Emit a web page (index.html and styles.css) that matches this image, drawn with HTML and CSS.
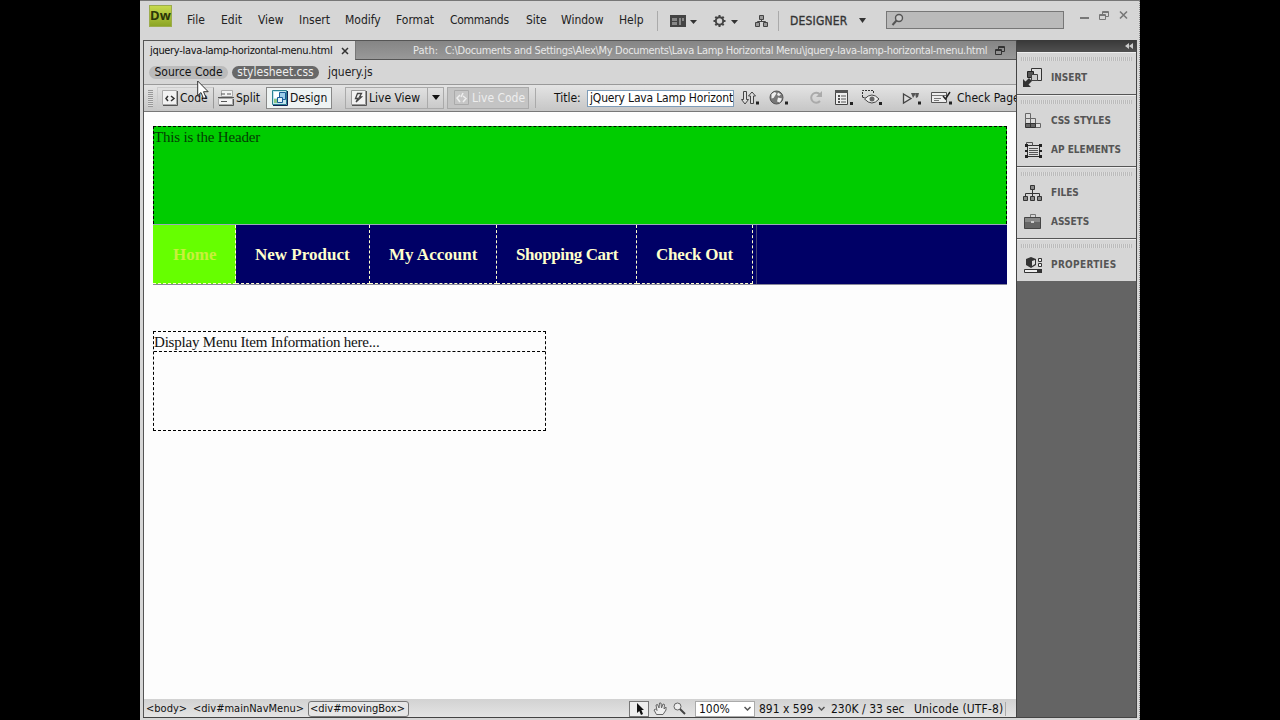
FILE: index.html
```
<!DOCTYPE html>
<html lang="en">
<head>
    <meta charset="UTF-8">
    <title>jquery-lava-lamp-horizontal-menu.html</title>
    <link rel="stylesheet" href="styles.css">
</head>
<body>
<div class="app">
    <div class="menubar">
        <div class="logo">Dw</div>
        <ul class="menu">
            <li class="w34">File</li>
            <li class="w37">Edit</li>
            <li class="w41">View</li>
            <li class="w46">Insert</li>
            <li class="w51">Modify</li>
            <li class="w54">Format</li>
            <li class="w76">Commands</li>
            <li class="w35">Site</li>
            <li class="w58">Window</li>
            <li class="w38">Help</li>
        </ul>
        <div class="app-tools">
            <svg class="ic-layout" width="28" height="14" viewBox="0 0 28 14"><path fill="#444" d="M0 1h16v12H0z"/><path fill="#888" d="M2 4h5v3H2zM2 8h5v3H2zM9 4h2v7H9zM12 4h2v3h-2z"/><path fill="#333" d="M20 6h7l-3.500 4z"/></svg>
            <svg class="ic-gear" width="27" height="14" viewBox="0 0 27 14"><circle cx="6.500" cy="7" r="3.700" fill="none" stroke="#444" stroke-width="2"/><path stroke="#444" stroke-width="2" d="M6.500 1v2M6.500 11v2M.5 7h2M10.500 7h2M2.300 2.800l1.500 1.500M9.200 9.700l1.500 1.500M10.700 2.800L9.200 4.300M3.800 9.700l-1.500 1.500"/><path fill="#333" d="M18 6h7l-3.500 4z"/></svg>
            <svg class="ic-site" width="13" height="14" viewBox="0 0 13 14"><path fill="#999" stroke="#444" d="M4.500 1.500h4v4h-4zM.5 8.500h4v4h-4zM8.500 8.500h4v4h-4z"/><path fill="none" stroke="#444" d="M6.500 5.500v2M2.500 8.500v-1h8v1"/></svg>
        </div>
        <div class="workspace-name">DESIGNER <svg width="9" height="6" viewBox="0 0 9 6"><path fill="#333" d="M1 0h7L4.500 5z"/></svg></div>
        <div class="search">
            <svg width="14" height="14" viewBox="0 0 14 14"><circle cx="8" cy="5" r="3.500" fill="#ccc" stroke="#555" stroke-width="1.400"/><path stroke="#555" stroke-width="2" d="M5.500 7.500L1.500 12"/></svg>
        </div>
        <div class="window-buttons">
            <svg width="50" height="12" viewBox="0 0 50 12"><path fill="none" stroke="#777" stroke-width="2" d="M0 8h9"/><path fill="none" stroke="#777" d="M19.500 4.500h6v5h-6zM19.500 5.500h6M22.500 4v-2.500h6v5h-3M22.500 2.500h6"/><path stroke="#777" stroke-width="1.600" d="M40 1.500l7 7M47 1.500l-7 7"/></svg>
        </div>
    </div>

    <div class="workspace">
        <div class="document">
            <div class="tabs">
                <div class="tab"><span>jquery-lava-lamp-horizontal-menu.html</span>
                    <svg width="8" height="8" viewBox="0 0 8 8"><path stroke="#333" stroke-width="1.500" d="M1 1l6 6M7 1L1 7"/></svg>
                </div>
                <div class="path"><span class="path-label">Path:</span><span class="path-text">C:\Documents and Settings\Alex\My Documents\Lava Lamp Horizontal Menu\jquery-lava-lamp-horizontal-menu.html</span>
                    <svg width="11" height="11" viewBox="0 0 11 11"><path fill="none" stroke="#333" d="M.5 4.500h6v5h-6zM.5 5.500h6M3.500 4V1.500h6v5h-3M3.500 2.500h6"/></svg>
                </div>
            </div>
            <div class="related">
                <span class="pill source">Source Code</span>
                <span class="pill css">stylesheet.css</span>
                <span class="js">jquery.js</span>
            </div>
            <div class="toolbar">
                <div class="grip"></div>
                <div class="btn code"><svg width="16" height="16" viewBox="0 0 16 16"><path fill="#f2f2f2" stroke="#aaa" d="M.5.5h14v14H.5z"/><path stroke="#555" d="M15.500 1v14.500H1" fill="none"/><path fill="none" stroke="#333" stroke-width="1.500" d="M6 6L4 8.500 6 11M9 6l3 2.500L9 11"/></svg><span>Code</span></div>
                <div class="btn split"><svg width="16" height="16" viewBox="0 0 16 16"><path fill="#f2f2f2" stroke="#aaa" d="M3.500.5h11v6h-11zM.5 8.500h14v6H.5z"/><path fill="none" stroke="#555" d="M0 7.500h16M15.500 9v6.500H1M3 4h4M9 4h4M3 11.500h6"/></svg><span>Split</span></div>
                <div class="btn design"><svg width="16" height="16" viewBox="0 0 16 16"><path fill="#c4e4ee" stroke="#2b8292" d="M.5.5h14v14H.5z"/><path fill="#fff" d="M2 2h5v6H2z"/><path fill="#9ccdea" stroke="#1a5c9a" d="M7.500 2.500h6v7h-6z"/><path fill="#8cc884" d="M2 9h5v4H2z"/><path fill="#e3f4fa" stroke="#1a5c9a" d="M5.500 7.500h5v5h-5z"/><path stroke="#125" d="M15.500 1v14.500H1" fill="none"/></svg><span>Design</span></div>
                <div class="btn live-view"><svg width="16" height="16" viewBox="0 0 16 16"><path fill="#f2f2f2" stroke="#999" d="M.5.5h14v14H.5z"/><path stroke="#555" d="M15.500 1v14.500H1" fill="none"/><path fill="none" stroke="#444" stroke-width="1.300" d="M6.500 3.500h4L8.500 7h2L5 12l2-3.500H4.500z"/></svg><span>Live View</span></div>
                <div class="btn drop"><svg width="8" height="6" viewBox="0 0 8 6"><path fill="#111" d="M0 0h8L4 5z"/></svg></div>
                <div class="btn live-code"><svg width="16" height="16" viewBox="0 0 16 16"><path fill="#c6c6c6" stroke="#aaa" d="M.5.5h14v14H.5z"/><path fill="none" stroke="#eee" stroke-width="1.500" d="M6 5L3 8l3 4M9 6l3 2.500L9 12M9 3L7 7"/></svg><span>Live Code</span></div>
                <div class="title-label">Title:</div>
                <div class="title-input">jQuery Lava Lamp Horizont</div>
                <svg class="ic-updown" width="20" height="16" viewBox="0 0 20 16"><path fill="#ddd" stroke="#444" d="M3.500 1.500h3v8h2L5 14 1.500 9.500h2zM10.500 13.500h3V6h2L12 2 8.500 6h2z"/><path fill="#222" d="M16 11.500h3v3h-3z"/></svg>
                <svg class="ic-globe" width="20" height="16" viewBox="0 0 20 16"><circle cx="7.500" cy="7.500" r="6.500" fill="#777" stroke="#555"/><path fill="#eee" d="M2.500 4l3-2 2 1-1 2-2 3-2 .5zM9 2.500l3 2-2 1.500-2-1zM9 7.500l4 1-2 4-3-1z"/><path fill="#222" d="M16 11.500h3v3h-3z"/></svg>
                <svg class="ic-refresh" width="14" height="16" viewBox="0 0 14 16"><path fill="none" stroke="#aaa" stroke-width="2" d="M11 4.500A5 5 0 1 0 11 11"/><path fill="#aaa" d="M13 1v6H7z"/></svg>
                <svg class="ic-options" width="20" height="16" viewBox="0 0 20 16"><path fill="#eee" stroke="#444" d="M1.500.5h12v14h-12z"/><path fill="#555" d="M1 0h13v3H1zM4 5h2v2H4zM4 8h2v2H4zM4 11h2v2H4zM7 5.500h5v1H7zM7 8.500h5v1H7zM7 11.500h5v1H7z"/><path fill="#222" d="M16 12h3v3h-3z"/></svg>
                <svg class="ic-eye" width="22" height="16" viewBox="0 0 22 16"><path fill="none" stroke="#333" stroke-dasharray="2 1" d="M1.500 7V.5h11V4M1.500 7.500H5"/><path fill="#eee" stroke="#444" d="M3.500 9Q11 1 18 9Q11 17 3.500 9z"/><circle cx="11" cy="9" r="2.500" fill="#666"/><path fill="#222" d="M18 12h3v3h-3z"/></svg>
                <svg class="ic-validate" width="21" height="16" viewBox="0 0 21 16"><path fill="#ddd" stroke="#444" stroke-width="1.300" d="M1.500 4L9 8.500l-7.500 4.500z"/><path fill="#555" d="M9 3h4v2l-2 3zM13 3h4l-1 4-2 1z"/><path fill="#222" d="M16 11.500h3v3h-3z"/></svg>
                <svg class="ic-check" width="22" height="16" viewBox="0 0 22 16"><path fill="#eee" stroke="#555" d="M.5 2.500h15v10H.5z"/><path stroke="#777" d="M1 5.500h14M3 8.500h7M3 10.500h5"/><path fill="none" stroke="#222" stroke-width="1.500" d="M12 6l2.500 3L19 2"/><path fill="#222" d="M18 11.500h3v3h-3z"/></svg>
                <span class="check-page">Check Page</span>
            </div>

            <div class="canvas">
                <div class="page-header">This is the Header</div>
                <div class="nav">
                    <div class="nav-item home">Home</div>
                    <div class="nav-item product">New Product</div>
                    <div class="nav-item account">My Account</div>
                    <div class="nav-item shopping">Shopping Cart</div>
                    <div class="nav-item checkout">Check Out</div>
                    <div class="nav-end"></div>
                </div>
                <div class="info">
                    <div class="info-text">Display Menu Item Information here...</div>
                </div>
            </div>

            <div class="status">
                <span class="tag t-body">&lt;body&gt;</span>
                <span class="tag t-nav">&lt;div#mainNavMenu&gt;</span>
                <span class="tag selected">&lt;div#movingBox&gt;</span>
                <div class="status-right">
                    <span class="pointer"><svg width="9" height="13" viewBox="0 0 9 13"><path fill="#111" d="M1 0v10l2.300-2L5 12l2-1-1.600-4H8z"/></svg></span>
                    <svg class="ic-hand" width="14" height="14" viewBox="0 0 14 14"><path fill="#eee" stroke="#666" d="M3.500 12.500L1 8l1.500-1L4 8.500 3 3l1.500-.5L6 6l.5-5L8 1l.5 5L10 2l1.500.5L11 7l2-2v3l-3 4.500z"/></svg>
                    <svg class="ic-zoom" width="13" height="13" viewBox="0 0 13 13"><circle cx="4.500" cy="4.500" r="3.500" fill="#eee" stroke="#666"/><path stroke="#444" stroke-width="2" d="M7 7l5 5"/></svg>
                    <span class="percent">100% <svg width="7" height="5" viewBox="0 0 7 5"><path fill="none" stroke="#555" stroke-width="1.500" d="M.5 1l3 3 3-3"/></svg></span>
                    <span class="size">891 x 599<svg width="7" height="5" viewBox="0 0 7 5"><path fill="none" stroke="#555" stroke-width="1.500" d="M.5 1l3 3 3-3"/></svg></span>
                    <span class="weight">230K / 33 sec</span>
                    <span class="encoding">Unicode (UTF-8)</span>
                </div>
            </div>
        </div>

        <div class="dock">
            <div class="dock-top"><svg width="8" height="6" viewBox="0 0 8 6"><path fill="#ccc" d="M4 0v6L0 3zM8 0v6L4 3z"/></svg></div>
            <div class="group">
                <div class="panel"><svg width="20" height="20" viewBox="0 0 20 20"><path fill="#ddd" stroke="#333" d="M8.500.5h10v12h-10z"/><path fill="#555" stroke="#222" d="M4.500 3.500h6v6h-6z"/><path fill="#ccc" stroke="#444" d="M8.500 6.500h6v6h-6z"/><path fill="#333" d="M0 11l2.500 2.500L6 10l3 3-3.500 3.500L8 19H0z"/></svg><span>INSERT</span></div>
            </div>
            <div class="group">
                <div class="panel"><svg width="18" height="18" viewBox="0 0 18 18"><path fill="#ddd" stroke="#666" d="M1.500 1.500h5v5h-5zM1.500 6.500h5v5h-5zM6.500 6.500h5v5h-5zM11.500 11.500h5v4h-5z"/><path fill="#666" stroke="#333" d="M1.500 11.500h5v4h-5zM6.500 11.500h5v4h-5z"/></svg><span>CSS STYLES</span></div>
                <div class="panel"><svg width="18" height="18" viewBox="0 0 18 18"><path fill="#ddd" stroke="#333" d="M3.500 4.500h12v11h-12z"/><path fill="none" stroke="#555" d="M2.500 4V1.500h6v3M5 7.500h9M5 9.500h9M5 11.500h9M5 13.500h9"/><path fill="#222" d="M1 3h3v3H1zM15 3h3v3h-3zM1 9h3v2H1zM15 9h3v2h-3zM1 14h3v3H1zM15 14h3v3h-3z"/></svg><span>AP ELEMENTS</span></div>
            </div>
            <div class="group">
                <div class="panel"><svg width="20" height="18" viewBox="0 0 20 18"><path fill="#888" stroke="#333" d="M7.500 1.500h4v4h-4zM.5 12.500h4v4h-4zM7.500 12.500h4v4h-4zM14.500 12.500h4v4h-4z"/><path fill="none" stroke="#333" d="M9.500 6v6M2.500 12V9.500h14V12"/></svg><span>FILES</span></div>
                <div class="panel"><svg width="18" height="18" viewBox="0 0 18 18"><path fill="none" stroke="#777" d="M6.500 4V1.500h5V4"/><path fill="#666" stroke="#444" d="M.5 4.500h16v11H.5z"/><path fill="#888" d="M1 5h15v4H1z"/><path fill="#ccc" d="M7 8h3v2H7z"/></svg><span>ASSETS</span></div>
            </div>
            <div class="group last">
                <div class="panel"><svg width="20" height="18" viewBox="0 0 20 18"><path fill="#333" d="M3 3l5-2 5 2v6l-5 3-5-3z"/><path fill="#ddd" d="M9 5l3-1v4l-3 2z"/><path fill="#eee" stroke="#333" d="M15.500 2.500h3v3h-3zM15.500 7.500h3v3h-3zM1.500 13.500h17v3h-17z"/><path fill="#333" d="M14 13h5v4h-5z"/></svg><span class="props">PROPERTIES</span></div>
            </div>
        </div>
    </div>
    <svg class="cursor" width="13" height="20" viewBox="0 0 13 20"><path fill="#fff" stroke="#333" d="M.7 1v14.500l3.300-3 2.500 6 2.500-1-2.500-5.800h4.700z"/></svg>
</div>
</body>
</html>
```

FILE: styles.css
```
* {
    box-sizing: border-box;
}
body {
    margin: 0;
    background-color: #000;
    font-family: "DejaVu Sans Condensed", "DejaVu Sans", sans-serif;
    font-size: 11px;
    color: #222;
}
svg {
    display: block;
    flex: none;
}
.app {
    position: relative;
    width: 1000px;
    height: 720px;
    margin-left: 140px;
    background-color: #d6d6d6;
    border-top: 1px solid #777;
    border-right: 1px dotted #888;
    overflow: hidden;
    white-space: nowrap;
}

/* menu bar */
.menubar {
    display: flex;
    height: 39px;
}
.logo {
    width: 23px;
    height: 22px;
    margin: 4px 0 0 9px;
    background: linear-gradient(#c7d94c, #8ca525);
    border: 1px solid #9cac4c;
    color: #2c3708;
    font: bold 13px/19px "Open Sans", sans-serif;
    text-align: center;
}
.menu {
    display: flex;
    list-style: none;
    margin: 0 0 0 15px;
    padding: 0;
    font-size: 12px;
    line-height: 38px;
}
.w34 { width: 34px; }
.w37 { width: 37px; }
.w41 { width: 41px; }
.w46 { width: 46px; }
.w51 { width: 51px; }
.w54 { width: 54px; }
.w76 { width: 76px; letter-spacing: -0.3px; }
.w35 { width: 35px; }
.w58 { width: 58px; }
.w38 { width: 38px; }
.app-tools {
    display: flex;
    height: 20px;
    margin-top: 10px;
    padding: 3px 0 0 12px;
    width: 122px;
    border-left: 1px solid #aaa;
    border-right: 1px solid #aaa;
}
.ic-gear {
    margin-left: 15px;
}
.ic-site {
    margin-left: 15px;
}
.workspace-name {
    display: flex;
    align-items: center;
    justify-content: space-between;
    width: 77px;
    height: 40px;
    margin-left: 11px;
    color: #333;
    font-size: 12px;
    letter-spacing: 0.2px;
    -webkit-text-stroke: 0.3px #333;
}
.search {
    width: 178px;
    height: 18px;
    margin: 10px 0 0 19px;
    padding: 1px 0 0 4px;
    border: 1px solid #777;
    background-color: #bababa;
}
.window-buttons {
    margin: 9px 0 0 16px;
}

/* workspace */
.workspace {
    display: flex;
    height: 678px;
    margin: 0 2px 0 3px;
    border-bottom: 1px solid #444;
}
.document {
    display: flex;
    flex: none;
    flex-direction: column;
    width: 873px;
    border-left: 1px solid #555;
    overflow: hidden;
}
.tabs {
    display: flex;
    height: 20px;
    border-top: 1px solid #555;
    line-height: 19px;
    letter-spacing: -0.32px;
}
.tab {
    display: flex;
    align-items: center;
    width: 211px;
    padding-left: 6px;
    background-color: #d9d9d9;
    color: #111;
}
.tab span {
    width: 191px;
}
.path {
    display: flex;
    flex: 1;
    align-items: center;
    padding-left: 57px;
    background: linear-gradient(#858585, #999);
    border-bottom: 1px solid #555;
    border-left: 1px solid #777;
    color: #e8e8e8;
}
.path-label {
    width: 32px;
    letter-spacing: 0;
}
.path-text {
    width: 550px;
}
.related {
    display: flex;
    align-items: center;
    height: 25px;
    padding-left: 5px;
    border-bottom: 1px solid #999;
    font-size: 12px;
}
.pill {
    height: 13px;
    border-radius: 7px;
    line-height: 13px;
    text-align: center;
}
.source {
    width: 79px;
    background-color: #bbb;
    color: #111;
}
.css {
    width: 87px;
    margin-left: 4px;
    background-color: #686868;
    color: #eee;
}
.js {
    margin-left: 9px;
}
.toolbar {
    display: flex;
    align-items: center;
    height: 27px;
    border-bottom: 1px solid #777;
    background: linear-gradient(#e4e4e4, #c6c6c6);
    color: #111;
    font-size: 12px;
}
.grip {
    flex: none;
    width: 5px;
    height: 17px;
    margin-left: 4px;
    background: repeating-linear-gradient(#999 0 1px, #ddd 1px 2px);
}
.btn {
    display: flex;
    align-items: center;
    flex: none;
    height: 22px;
    gap: 2px;
}
.code {
    width: 57px;
    margin-left: 4px;
    padding-left: 4px;
    border: 1px solid #ccc;
    border-right-color: #999;
}
.split {
    width: 52px;
    padding-left: 4px;
}
.design {
    width: 66px;
    padding-left: 5px;
    border: 1px solid #888;
    background-color: #eef3f3;
}
.live-view {
    width: 83px;
    margin-left: 13px;
    padding-left: 5px;
    border: 1px solid #aaa;
}
.drop {
    width: 16px;
    justify-content: center;
    border: 1px solid #aaa;
    border-left: 0;
}
.live-code {
    width: 82px;
    margin-left: 3px;
    padding-left: 6px;
    border: 1px solid #aaa;
    background-color: #c4c4c4;
    color: #eee;
}
.title-label {
    display: flex;
    flex: none;
    align-items: center;
    width: 52px;
    height: 20px;
    margin-left: 6px;
    padding-left: 18px;
    border-left: 1px solid #aaa;
}
.title-input {
    flex: none;
    width: 147px;
    height: 17px;
    padding-left: 2px;
    border: 1px solid #7f9db9;
    background-color: #fff;
    line-height: 15px;
    letter-spacing: -0.17px;
    overflow: hidden;
}
.ic-updown {
    margin-left: 6px;
}
.ic-globe {
    margin-left: 9px;
}
.ic-refresh {
    margin-left: 20px;
}
.ic-options {
    margin-left: 11px;
}
.ic-eye {
    margin-left: 7px;
}
.ic-validate {
    margin-left: 19px;
}
.ic-check {
    margin-left: 8px;
}
.check-page {
    flex: none;
    margin-left: 4px;
}

/* page being edited */
.canvas {
    flex: 1;
    padding: 14px 9px 0 9px;
    background-color: #fdfdfd;
    color: #111;
    font-family: "Liberation Serif", serif;
    font-size: 15px;
    letter-spacing: -0.2px;
}
.page-header {
    height: 98px;
    border: 1px dashed #000;
    border-bottom: 0;
    background-color: #00cc00;
    color: #043c04;
    line-height: 20px;
}
.nav {
    display: flex;
    height: 61px;
    border-top: 1px solid #9ab;
    border-bottom: 1px solid #889;
    background-color: #000066;
    color: #ffffcc;
    font-size: 17px;
    font-weight: bold;
    line-height: 60px;
    letter-spacing: 0;
}
.nav-item {
    height: 59px;
    padding-left: 19px;
    border-bottom: 1px dashed #ffc;
    border-right: 1px dashed #ffc;
}
.home {
    width: 83px;
    padding-left: 20px;
    background-color: #66ff00;
    color: #c8f03c;
}
.product { width: 134px; }
.account { width: 127px; }
.shopping {
    width: 140px;
    letter-spacing: -0.4px;
}
.checkout {
    width: 116px;
    letter-spacing: -0.2px;
}
.nav-end {
    width: 4px;
    border-right: 1px solid #447;
}
.info {
    width: 393px;
    height: 100px;
    margin-top: 46px;
    border: 1px dashed #000;
}
.info-text {
    height: 20px;
    border-bottom: 1px dashed #000;
    line-height: 20px;
}

/* status bar */
.status {
    display: flex;
    align-items: center;
    height: 18px;
    padding-top: 1px;
    background: linear-gradient(#d2d2d2, #e4e4e4);
    color: #111;
}
.tag {
    line-height: 16px;
    padding-left: 2px;
}
.t-body { width: 47px; }
.t-nav { width: 117px; }
.selected {
    width: 101px;
    padding-left: 1px;
    border: 1px solid #777;
    border-radius: 3px;
    background-color: #e6e6e6;
    line-height: 14px;
}
.status-right {
    display: flex;
    align-items: center;
    height: 17px;
    margin-left: 220px;
    font-size: 12px;
}
.pointer {
    width: 20px;
    height: 16px;
    padding: 1px 0 0 6px;
    border: 1px solid #777;
    background-color: #eee;
}
.ic-hand {
    margin-left: 4px;
}
.ic-zoom {
    margin-left: 6px;
}
.percent {
    display: flex;
    align-items: center;
    justify-content: space-between;
    width: 60px;
    height: 16px;
    margin-left: 9px;
    padding: 0 3px;
    border: 1px solid #aaa;
    background-color: #fff;
}
.size {
    display: flex;
    align-items: center;
    justify-content: space-between;
    width: 69px;
    margin-left: 4px;
    padding-right: 3px;
}
.weight {
    width: 83px;
    padding-left: 3px;
}
.encoding {
    width: 95px;
    padding-left: 3px;
    border-right: 1px solid #aaa;
    letter-spacing: 0.15px;
}

/* docked panels */
.dock {
    flex: none;
    width: 121px;
    border-left: 1px solid #444;
    border-right: 1px solid #444;
    background-color: #646464;
}
.dock-top {
    display: flex;
    justify-content: flex-end;
    height: 12px;
    padding: 3px 3px 0 0;
    background: linear-gradient(#383838, #505050);
}
.group {
    padding-bottom: 2px;
    border-bottom: 1px solid #555;
    border-top: 1px solid #eee;
    background-color: #d6d6d6;
}
.group::before {
    content: "";
    display: block;
    height: 4px;
    margin: 4px 4px 2px;
    background: repeating-linear-gradient(90deg, #bbb 0 1px, #ddd 1px 2px);
}
.last {
    border-bottom: 0;
}
.panel {
    display: flex;
    align-items: center;
    height: 29px;
    padding-left: 6px;
    color: #555;
    font-weight: bold;
    font-size: 10px;
}
.panel svg {
    width: 20px;
}
.panel span {
    margin-left: 8px;
}
.panel .props {
    letter-spacing: 0.3px;
}

.cursor {
    position: absolute;
    left: 57px;
    top: 79px;
}
```
